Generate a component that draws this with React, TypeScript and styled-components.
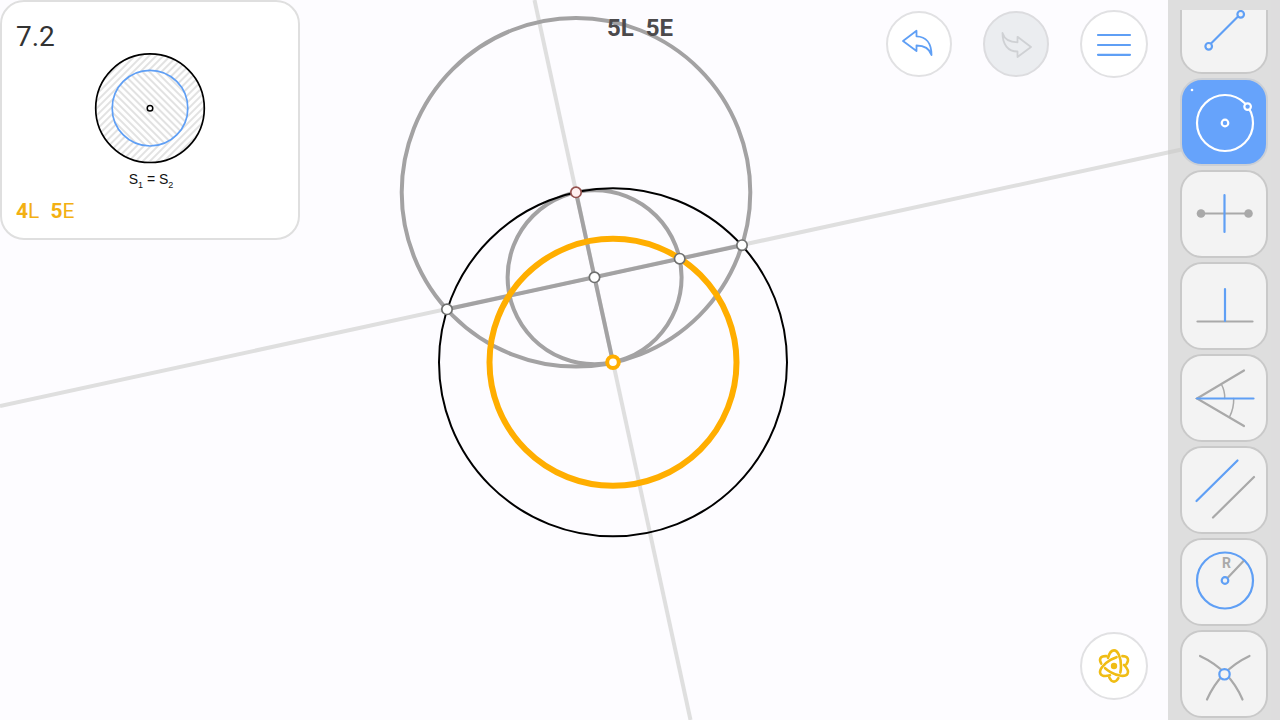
import React from "react";
import styled, { createGlobalStyle } from "styled-components";

const BLUE = "#5f9ff5";
const GRAY = "#a9a9a9";
const GOLD = "#f0bd14";

const GlobalStyle = createGlobalStyle`
  * {
    box-sizing: border-box;
  }

  body {
    margin: 0;
    background: #fdfcff;
    font-family: Roboto, "Liberation Sans", sans-serif;
  }
`

const Page = styled.div`
  display: grid;
  grid-template-columns: 1fr 112px;
  grid-template-rows: 100vh;
  overflow: hidden;
`

const Board = styled.svg`
  grid-area: 1 / 1 / 2 / 3;
  width: 100%;
  height: 100%;
  display: block;
`

const Overlay = styled.main`
  grid-area: 1 / 1;
  z-index: 1;
  display: flex;
  flex-direction: column;
  justify-content: space-between;
`

const TopBar = styled.header`
  display: grid;
  grid-template-columns: 300px 1fr auto;
  align-items: start;
  padding-right: 20px;
`

const Card = styled.section`
  display: flex;
  flex-direction: column;
  height: 240px;
  padding: 18px 14px 15px;
  border: 2px solid #dfdfdf;
  border-radius: 24px;
  background: #fff;
`

const Level = styled.h1`
  margin: 0;
  font-size: 28px;
  line-height: 33px;
  font-weight: 400;
  color: #333;
`

const Figure = styled.figure`
  display: flex;
  flex-direction: column;
  align-items: center;
  flex: 1;
  margin: 0;
`

const Caption = styled.figcaption`
  font-family: "Liberation Sans", sans-serif;
  font-size: 14px;
  line-height: 28px;
  color: #111;
  padding-left: 2px;

  sub {
    font-size: 9px;
    line-height: 0;
  }
`

const Goal = styled.p`
  display: flex;
  gap: 11px;
  margin: 0;
  font-size: 21px;
  line-height: 24px;
  font-weight: 400;
  color: #f3b012;

  b {
    font-weight: 700;
  }
`

const Score = styled.output`
  display: flex;
  gap: 12px;
  padding: 14px 0 0 307px;
  font-size: 24px;
  line-height: 28px;
  font-weight: 700;
  color: #4c4a4c;
`

const Actions = styled.nav`
  display: flex;
  align-items: center;
  gap: 31px;
  padding-top: 10px;
`

const BottomBar = styled.footer`
  display: flex;
  justify-content: flex-end;
  padding: 0 20px 20px;
`

const RoundButton = styled.button<{ $small?: boolean }>`
  display: flex;
  align-items: center;
  justify-content: center;
  width: ${({ $small }) => ($small ? "66px" : "68px")};
  height: ${({ $small }) => ($small ? "66px" : "68px")};
  padding: 0;
  border: 2px solid #e1e1e3;
  border-radius: 50%;
  background: #fff;
  cursor: pointer;

  &:disabled {
    background: #ebedf0;
    border-color: #dcdcdf;
    cursor: default;
  }
`

const Sidebar = styled.aside`
  grid-area: 1 / 2;
  z-index: 1;
  min-height: 0;
  padding-top: 10px;
  background: rgba(201, 201, 200, 0.6);
`

// scrolled to the end, so the first tool is cut at the top edge
const ToolList = styled.div`
  display: flex;
  flex-direction: column;
  justify-content: flex-end;
  align-items: center;
  gap: 4px;
  height: 100%;
  padding-bottom: 2px;
  overflow: hidden;
`

const ToolButton = styled.button<{ $active?: boolean }>`
  flex: none;
  width: 88px;
  height: 88px;
  padding: 0;
  border: 2px solid ${({ $active }) => ($active ? "#cbcfd5" : "#c9c9c9")};
  border-radius: 22px;
  background: ${({ $active }) => ($active ? "#66a3fb" : "#f3f3f3")};
  cursor: pointer;

  svg {
    display: block;
  }
`

interface ToolProps {
  name: string;
  active?: boolean;
  children: React.ReactNode;
}

const Tool = ({ name, active, children }: ToolProps) => {
  return (
    <ToolButton type="button" aria-label={name} aria-pressed={!!active} $active={active}>
      <svg width="84" height="84" viewBox="2 2 84 84" fill="none" strokeWidth="2.2" strokeLinecap="round">
        {children}
      </svg>
    </ToolButton>
  )
}

const Construction = () => {
  return (
    <Board viewBox="0 0 1280 720" preserveAspectRatio="xMidYMid slice" fill="none" aria-label="Construction">
      <g stroke="#dfdfdf" strokeWidth="4">
        <path d="M0 406 L1184 149" />
        <path d="M534.5 0 L690.5 720" />
      </g>
      <g stroke="#a3a2a3" strokeWidth="4">
        <circle cx="576" cy="192.3" r="174.3" />
        <circle cx="594.6" cy="277.3" r="87" />
        <path d="M447 309.3 L742 245.2" />
        <path d="M576 192.3 L613 362.3" />
      </g>
      <circle cx="613" cy="362.3" r="174" stroke="#000" strokeWidth="2" />
      <circle cx="613" cy="362.3" r="123.5" stroke="#ffae00" strokeWidth="6" />
      <g fill="#fff" stroke="#6f706f" strokeWidth="1.7">
        <circle cx="447" cy="309.3" r="5.2" />
        <circle cx="742" cy="245.2" r="5.2" />
        <circle cx="679.7" cy="258.7" r="5.2" />
        <circle cx="594.5" cy="277.3" r="5.2" />
        <circle cx="576" cy="192.3" r="5.2" fill="#fff0f0" stroke="#95524f" />
      </g>
      <circle cx="613" cy="362.3" r="5.8" fill="#fff" stroke="#ffae00" strokeWidth="4" />
    </Board>
  )
}

const GoalPicture = () => {
  return (
    <svg width="112" height="112" viewBox="0 0 112 112" fill="none">
      <defs>
        <pattern id="rise" width="5" height="5" patternUnits="userSpaceOnUse" patternTransform="rotate(45)">
          <path d="M1 0V5" stroke="#cfcfcf" strokeWidth="1.2" />
        </pattern>
        <pattern id="fall" width="5" height="5" patternUnits="userSpaceOnUse" patternTransform="rotate(-45)">
          <path d="M1 0V5" stroke="#cfcfcf" strokeWidth="1.2" />
        </pattern>
      </defs>
      <circle cx="56" cy="55.2" r="54.3" fill="url(#rise)" stroke="#000" strokeWidth="1.7" />
      <circle cx="56" cy="55.2" r="37.8" fill="#fff" />
      <circle cx="56" cy="55.2" r="37.8" fill="url(#fall)" stroke={BLUE} strokeWidth="1.7" />
      <circle cx="56" cy="55.2" r="2.8" fill="#fff" stroke="#000" strokeWidth="1.5" />
    </svg>
  )
}

const AtomIcon = () => {
  return (
    <svg width="36" height="36" viewBox="0 0 36 36" fill="none" stroke={GOLD} strokeWidth="2.6" strokeLinecap="round">
      {[0, 120, 240].map((angle) => (
        <ellipse
          key={angle}
          cx="18"
          cy="18"
          rx="7"
          ry="15.6"
          pathLength="100"
          strokeDasharray="9 8 17 27 39 0"
          transform={`rotate(${angle} 18 18)`}
        />
      ))}
      <circle cx="18" cy="18" r="3.2" fill={GOLD} stroke="none" />
    </svg>
  )
}

const App = () => {
  return (
    <>
      <GlobalStyle />
      <Page>
        <Construction />
        <Overlay>
          <TopBar>
            <Card>
              <Level>7.2</Level>
              <Figure>
                <GoalPicture />
                <Caption>S<sub>1</sub> = S<sub>2</sub></Caption>
              </Figure>
              <Goal>
                <span><b>4</b>L</span>
                <span><b>5</b>E</span>
              </Goal>
            </Card>
            <Score>
              <span>5L</span>
              <span>5E</span>
            </Score>
            <Actions>
              <RoundButton type="button" aria-label="Undo" $small>
                <svg width="36" height="36" viewBox="0 0 36 36" fill="none" stroke={BLUE} strokeWidth="1.8" strokeLinejoin="round">
                  <path d="M2 15 L15.5 4.8 V10.3 C25 10.5 30.5 17 30.5 29 C28.5 22.5 23 19.5 15.5 19.5 V25 Z" />
                </svg>
              </RoundButton>
              <RoundButton type="button" aria-label="Redo" $small disabled>
                <svg width="36" height="36" viewBox="0 0 36 36" fill="none" stroke="#cfd1d4" strokeWidth="1.8" strokeLinejoin="round">
                  <path d="M33 21 L19.5 31 V25.5 C10 25.5 4.5 18.5 4.5 7 C6.5 13.5 12 16.3 19.5 16.3 V10.8 Z" />
                </svg>
              </RoundButton>
              <RoundButton type="button" aria-label="Menu">
                <svg width="36" height="24" viewBox="0 0 36 24" stroke={BLUE} strokeWidth="2.2" strokeLinecap="round">
                  <path d="M2 3H34M2 13H34M2 22.8H34" />
                </svg>
              </RoundButton>
            </Actions>
          </TopBar>
          <BottomBar>
            <RoundButton type="button" aria-label="Explore">
              <AtomIcon />
            </RoundButton>
          </BottomBar>
        </Overlay>
        <Sidebar>
          <ToolList>
            <Tool name="Line">
              <path d="M31 57.5 L58 30.5" stroke={BLUE} />
              <g fill="#f3f3f3" stroke={BLUE}>
                <circle cx="28.7" cy="60.3" r="3.3" />
                <circle cx="60.7" cy="28.3" r="3.3" />
              </g>
            </Tool>
            <Tool name="Circle" active>
              <g fill="#66a3fb" stroke="#fff">
                <circle cx="45" cy="45" r="28" />
                <circle cx="45" cy="45" r="3.3" />
                <circle cx="67.6" cy="28.6" r="3.3" />
              </g>
              <circle cx="12" cy="12" r="1.3" fill="#fff" />
            </Tool>
            <Tool name="Perpendicular bisector">
              <path d="M21 43.5H68" stroke={GRAY} />
              <circle cx="21" cy="43.5" r="4.3" fill={GRAY} />
              <circle cx="68.5" cy="43.5" r="4.3" fill={GRAY} />
              <path d="M44.5 25V62" stroke={BLUE} />
            </Tool>
            <Tool name="Perpendicular">
              <path d="M17.5 59.5H72.5" stroke={GRAY} />
              <path d="M45 27V59" stroke={BLUE} />
            </Tool>
            <Tool name="Angle bisector">
              <path d="M64 16.5 L17 44.5 L64 72" stroke={GRAY} />
              <path d="M41.5 30.5Q45 37 44.7 44.5M53.7 44.5Q54 54 49.5 63" stroke={GRAY} strokeWidth="1.5" />
              <path d="M17 44.5H73.5" stroke={BLUE} />
            </Tool>
            <Tool name="Parallel">
              <path d="M16.5 55 L57.5 14.5" stroke={BLUE} />
              <path d="M33 71.5 L74 31" stroke={GRAY} />
            </Tool>
            <Tool name="Compass">
              <path d="M47.5 40 L64 22.5" stroke={GRAY} />
              <circle cx="45" cy="42.5" r="28" stroke={BLUE} />
              <circle cx="45" cy="42.5" r="3.3" fill="#f3f3f3" stroke={BLUE} />
              <text x="42" y="30" fill={GRAY} fontFamily="Roboto, sans-serif" fontSize="14" fontWeight="700">R</text>
            </Tool>
            <Tool name="Intersect">
              <path d="M20 26 Q50 40 62.5 69.5M69.5 26 Q40 40 27 69.5" stroke={GRAY} />
              <circle cx="44.5" cy="44.3" r="5.2" fill="#f3f3f3" stroke={BLUE} />
            </Tool>
          </ToolList>
        </Sidebar>
      </Page>
    </>
  )
}

export default App
